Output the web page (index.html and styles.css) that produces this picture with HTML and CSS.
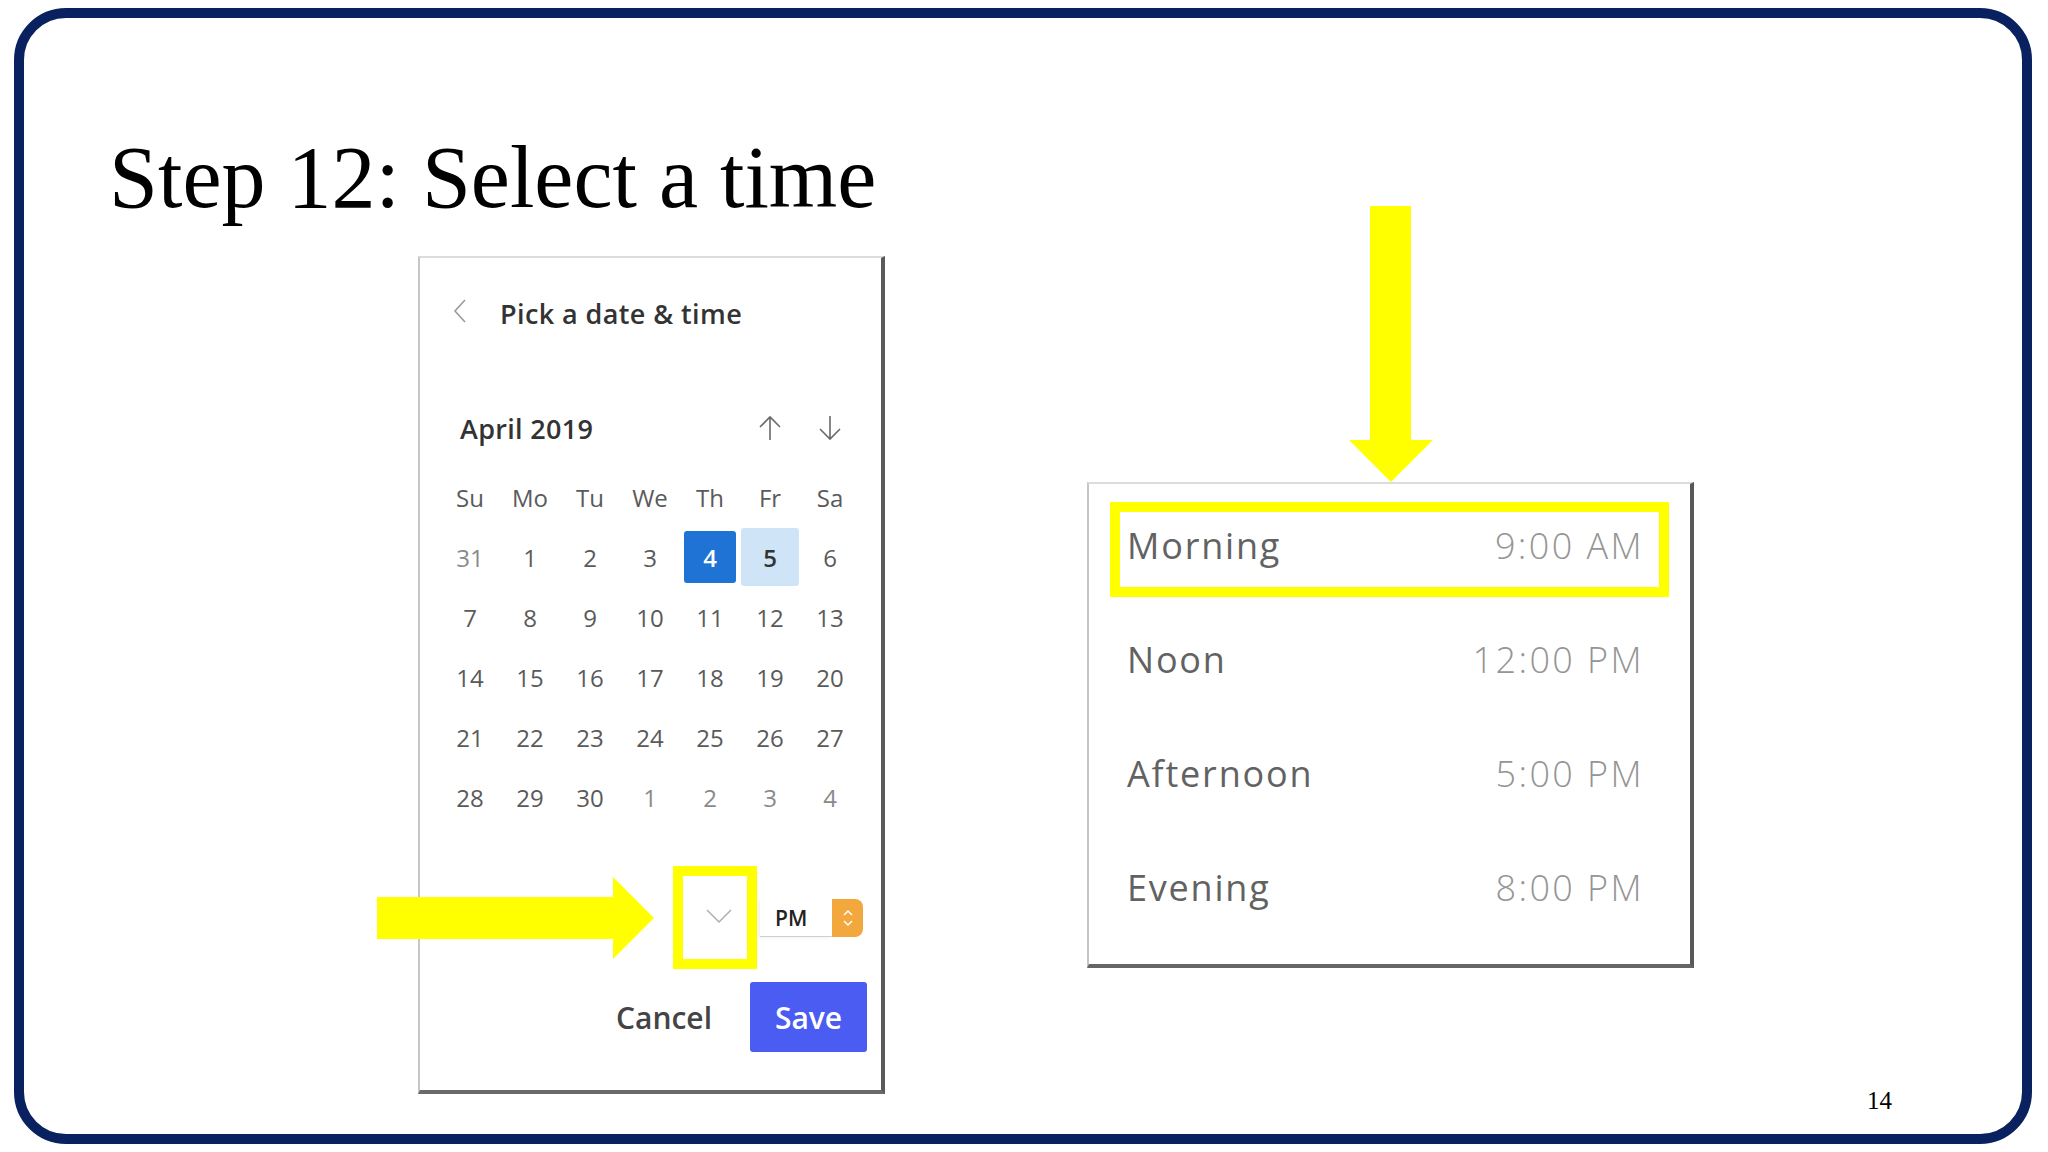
FILE: index.html
```html
<!DOCTYPE html>
<html lang="en">
<head>
  <meta charset="UTF-8">
  <title>Step 12: Select a time</title>
  <link rel="stylesheet" href="styles.css">
</head>
<body>

  <div class="slide">
    <div class="content">

      <div class="left-col">
        <h1 class="slide-title">Step 12: Select a time</h1>

        <div class="card">
          <div class="card-head">
            <svg class="back" width="14" height="24" viewBox="0 0 14 24"><path d="M12 1 L2 12 L12 23" fill="none" stroke="#9a9a9a" stroke-width="1.6"/></svg>
            <span>Pick a date &amp; time</span>
          </div>

          <div class="month-row">
            <span class="month">April 2019</span>
            <span class="nav">
              <svg width="26" height="26" viewBox="0 0 26 26"><path d="M13 2 V25 M3 12 L13 2 L23 12" fill="none" stroke="#6a6a6a" stroke-width="1.6"/></svg>
            </span>
            <span class="nav">
              <svg width="26" height="26" viewBox="0 0 26 26"><path d="M13 1 V24 M3 14 L13 24 L23 14" fill="none" stroke="#6a6a6a" stroke-width="1.6"/></svg>
            </span>
          </div>

          <div class="grid">
            <span class="wd">Su</span><span class="wd">Mo</span><span class="wd">Tu</span><span class="wd">We</span><span class="wd">Th</span><span class="wd">Fr</span><span class="wd">Sa</span>

            <span class="day out">31</span><span class="day">1</span><span class="day">2</span><span class="day">3</span>
            <span class="day"><b class="sel">4</b></span><span class="day"><b class="next">5</b></span><span class="day">6</span>

            <span class="day">7</span><span class="day">8</span><span class="day">9</span><span class="day">10</span><span class="day">11</span><span class="day">12</span><span class="day">13</span>
            <span class="day">14</span><span class="day">15</span><span class="day">16</span><span class="day">17</span><span class="day">18</span><span class="day">19</span><span class="day">20</span>
            <span class="day">21</span><span class="day">22</span><span class="day">23</span><span class="day">24</span><span class="day">25</span><span class="day">26</span><span class="day">27</span>
            <span class="day">28</span><span class="day">29</span><span class="day">30</span><span class="day out">1</span><span class="day out">2</span><span class="day out">3</span><span class="day out">4</span>
          </div>

          <div class="time-row">
            <div class="drop-mark">
              <svg width="26" height="14" viewBox="0 0 26 14"><path d="M1 1 L13 13 L25 1" fill="none" stroke="#b0b0b0" stroke-width="1.5"/></svg>
            </div>
            <div class="ampm">PM</div>
            <div class="spinner">
              <svg width="12" height="20" viewBox="0 0 12 20"><path d="M2 7 L6 3 L10 7 M2 13 L6 17 L10 13" fill="none" stroke="#fff" stroke-width="1.5"/></svg>
            </div>
          </div>

          <div class="actions">
            <button class="btn-cancel">Cancel</button>
            <button class="btn-save">Save</button>
          </div>

          <!-- yellow pointer over the dropdown -->
          <svg class="arrow-right" width="277" height="82" viewBox="0 0 277 82"><path d="M0 20 H236 V0 L277 41 L236 82 V62 H0 Z" fill="#ffff00"/></svg>
        </div>
      </div>

      <div class="right-col">
        <svg class="arrow-down" width="84" height="276" viewBox="0 0 84 276"><path d="M21 0 H62 V234 H84 L42 276 L0 234 H21 Z" fill="#ffff00"/></svg>

        <div class="time-panel">
          <div class="slot"><span class="slot-name">Morning</span><span class="slot-time">9:00 AM</span></div>
          <div class="slot"><span class="slot-name">Noon</span><span class="slot-time">12:00 PM</span></div>
          <div class="slot"><span class="slot-name">Afternoon</span><span class="slot-time">5:00 PM</span></div>
          <div class="slot"><span class="slot-name">Evening</span><span class="slot-time">8:00 PM</span></div>
          <div class="slot-mark"></div>
        </div>
      </div>

    </div>

    <div class="page-num">14</div>
  </div>

</body>
</html>
```

FILE: styles.css
```css
body {
  margin: 0;
  background-color: #fff;
  font-family: 'Open Sans', 'Noto Sans', sans-serif;
}

.slide {
  box-sizing: border-box;
  width: 2018px;
  height: 1136px;
  margin: 8px 0 0 14px;
  padding-top: 116px;
  border: 10px solid #0a2160;
  border-radius: 52px;
  display: flex;
  flex-direction: column;
}

.content {
  display: flex;
}

.left-col {
  padding-left: 85px;
}

.slide-title {
  margin: 0;
  font-family: 'Liberation Serif', serif;
  font-weight: normal;
  font-size: 88px;
  line-height: 88px;
  color: #000;
  white-space: nowrap;
}

/* date picker card */
.card {
  position: relative;
  box-sizing: border-box;
  width: 467px;
  height: 838px;
  margin: 34px 0 0 309px;
  background-color: #fff;
  border-left: 2px solid #c6c6c6;
  border-top: 2px solid #dcdcdc;
  border-right: 4px solid #5a5a5a;
  border-bottom: 4px solid #6a6a6a;
  color: #555;
}

.card-head {
  display: flex;
  align-items: center;
  gap: 33px;
  height: 40px;
  margin-top: 35px;
  padding-left: 33px;
  font-size: 27px;
  font-weight: 600;
  letter-spacing: 0.4px;
  color: #333;
}

.card-head .back {
  margin-top: -4px;
}

.month-row {
  display: flex;
  align-items: center;
  width: 420px;
  height: 40px;
  margin: 75px 0 0 20px;
}

.month {
  flex: 1;
  padding-left: 20px;
  font-size: 27px;
  font-weight: 600;
  letter-spacing: 0.3px;
  color: #333;
}

.nav {
  width: 60px;
  display: flex;
  justify-content: center;
}

.grid {
  display: grid;
  grid-template-columns: repeat(7, 60px);
  grid-auto-rows: 60px;
  margin: 19px 0 0 20px;
}

.wd,
.day {
  display: flex;
  align-items: center;
  justify-content: center;
  font-size: 24px;
  color: #5a5a5a;
}

.day.out {
  color: #8a8a8a;
}

.day b {
  display: flex;
  align-items: center;
  justify-content: center;
  font-weight: 600;
  border-radius: 3px;
}

.day .sel {
  width: 52px;
  height: 52px;
  background-color: #1f73d5;
  color: #fff;
}

.day .next {
  width: 58px;
  height: 58px;
  background-color: #cfe5f7;
  color: #333;
}

.time-row {
  display: flex;
  align-items: center;
  height: 103px;
  margin-top: 39px;
  padding-left: 253px;
}

.drop-mark {
  box-sizing: border-box;
  width: 84px;
  height: 103px;
  border: 10px solid #ffff00;
  display: flex;
  align-items: center;
  justify-content: center;
  padding-left: 8px;
  padding-bottom: 4px;
}

.ampm {
  box-sizing: border-box;
  width: 72px;
  height: 38px;
  margin-left: 3px;
  padding-left: 15px;
  border-bottom: 1px solid #cfcfcf;
  box-shadow: -2px 1px 3px rgba(0, 0, 0, 0.06);
  font-size: 21px;
  font-weight: 600;
  line-height: 38px;
  color: #222;
}

.spinner {
  width: 31px;
  height: 38px;
  background-color: #f2a83c;
  border-radius: 0 8px 8px 0;
  display: flex;
  align-items: center;
  justify-content: center;
}

.actions {
  display: flex;
  justify-content: flex-end;
  align-items: center;
  gap: 38px;
  margin-top: 13px;
  padding-right: 14px;
}

.actions button {
  font-family: 'Open Sans', 'Noto Sans', sans-serif;
  font-size: 30px;
  font-weight: 600;
  border: none;
  padding: 0;
}

.btn-cancel {
  background: none;
  color: #444;
}

.btn-save {
  width: 117px;
  height: 70px;
  background-color: #4a5cf2;
  color: #fff;
  border-radius: 3px;
}

.arrow-right {
  position: absolute;
  left: -43px;
  top: 619px;
}

/* time slots */
.right-col {
  display: flex;
  flex-direction: column;
  align-items: center;
  margin: 72px 0 0 202px;
}

.arrow-down {
  display: block;
}

.time-panel {
  position: relative;
  box-sizing: border-box;
  width: 607px;
  height: 486px;
  padding: 5px 46px 0 38px;
  background-color: #fff;
  border-left: 2px solid #c6c6c6;
  border-top: 2px solid #dcdcdc;
  border-right: 4px solid #585858;
  border-bottom: 4px solid #666;
}

.slot {
  display: flex;
  justify-content: space-between;
  height: 114px;
  line-height: 114px;
  font-size: 36px;
  letter-spacing: 1.8px;
}

.slot-name {
  color: #626262;
}

.slot-time {
  font-weight: 300;
  letter-spacing: 2.4px;
  color: #959595;
}

.slot-mark {
  position: absolute;
  left: 21px;
  top: 18px;
  box-sizing: border-box;
  width: 559px;
  height: 95px;
  border: 10px solid #ffff00;
}

.page-num {
  align-self: flex-end;
  margin: -8px 130px 0 0;
  font-family: 'Liberation Serif', serif;
  font-size: 25px;
  line-height: 30px;
  color: #000;
}
```
